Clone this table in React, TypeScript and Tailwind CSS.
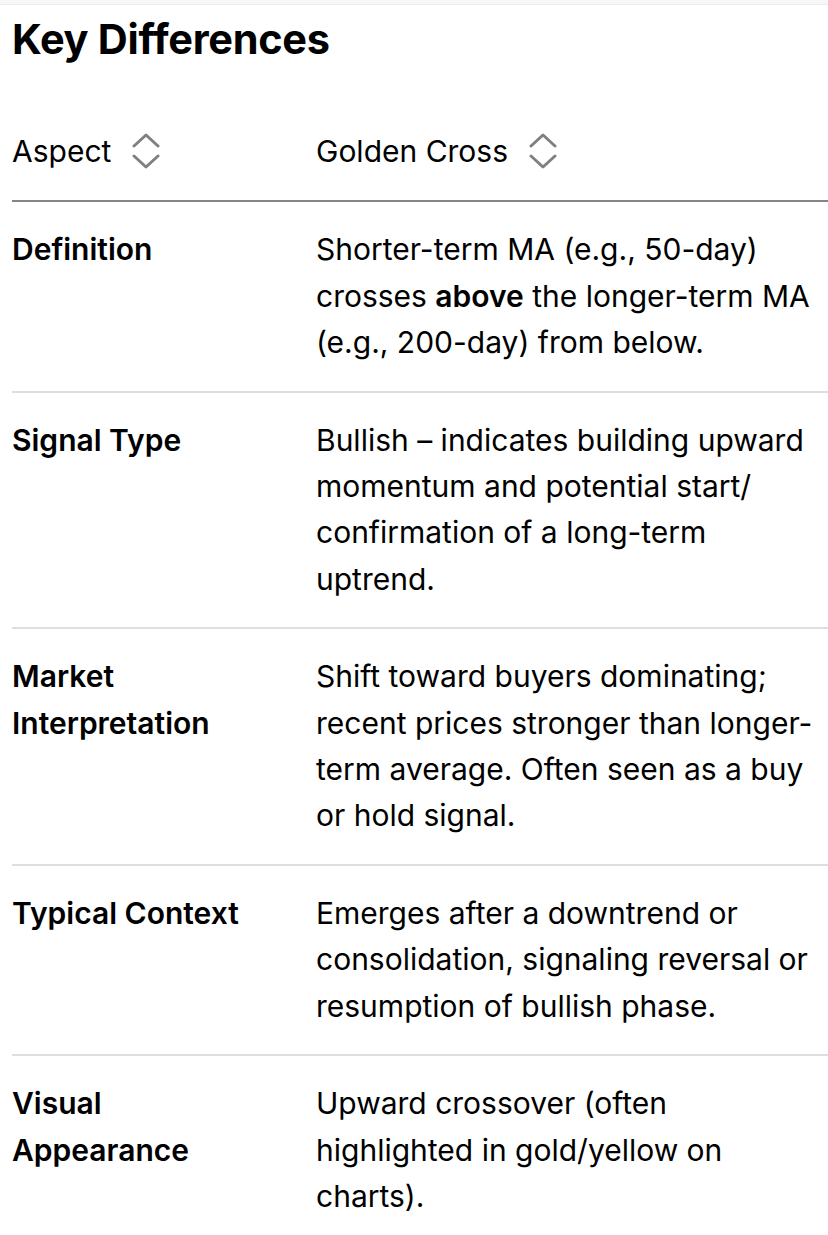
const rows: { aspect: string[]; text: React.ReactNode }[] = [
  {
    aspect: ["Definition"],
    text: (
      <>
        Shorter-term MA (e.g., 50-day) crosses <strong className="font-semibold">above</strong> the longer-term MA
        (e.g., 200-day) from below.
      </>
    ),
  },
  {
    aspect: ["Signal Type"],
    text: "Bullish – indicates building upward momentum and potential start/\u200Bconfirmation of a long-term uptrend.",
  },
  {
    aspect: ["Market", "Interpretation"],
    text: "Shift toward buyers dominating; recent prices stronger than longer-term average. Often seen as a buy or hold signal.",
  },
  {
    aspect: ["Typical Context"],
    text: "Emerges after a downtrend or consolidation, signaling reversal or resumption of bullish phase.",
  },
  {
    aspect: ["Visual", "Appearance"],
    text: "Upward crossover (often highlighted in gold/yellow on charts).",
  },
];

function SortIcon() {
  return (
    <svg width="28" height="36" viewBox="0 0 28 36" fill="none" className="ml-[21px] shrink-0">
      <path d="M2 13 L14 2 L26 13" stroke="#808080" strokeWidth="3" strokeLinecap="round" strokeLinejoin="round" />
      <path d="M2 23 L14 34 L26 23" stroke="#808080" strokeWidth="3" strokeLinecap="round" strokeLinejoin="round" />
    </svg>
  );
}

export default function App() {
  return (
    <div className="min-h-[1235px] bg-white text-black font-['Inter','Liberation_Sans',sans-serif]">
      {/* top strip */}
      <div className="h-[5px] bg-[#f7f7f7] border-b border-[#ececec]" />

      <div className="pl-3">
        <h2 className="text-[41.5px] font-bold leading-[48px] tracking-[-0.3px] mt-[10px]">Key Differences</h2>

        <table className="w-full mt-[39px] border-collapse text-[30px] leading-[46.4px]">
          <thead>
            <tr className="border-b-2 border-[#858585]">
              <th className="text-left font-normal py-[26px] w-[304px]">
                <div className="flex items-center">
                  Aspect
                  <SortIcon />
                </div>
              </th>
              <th className="text-left font-normal py-[26px]">
                <div className="flex items-center">
                  Golden Cross
                  <SortIcon />
                </div>
              </th>
            </tr>
          </thead>
          <tbody>
            {rows.map((r, i) => (
              <tr key={i} className={i < rows.length - 1 ? "border-b-2 border-[#dedede]" : ""}>
                <td className="align-top pt-[24px] pb-[25px] font-semibold pr-4">
                  {r.aspect.map((a) => (
                    <div key={a}>{a}</div>
                  ))}
                </td>
                <td className="align-top pt-[24px] pb-[25px] pr-2">{r.text}</td>
              </tr>
            ))}
          </tbody>
        </table>
      </div>
    </div>
  );
}
